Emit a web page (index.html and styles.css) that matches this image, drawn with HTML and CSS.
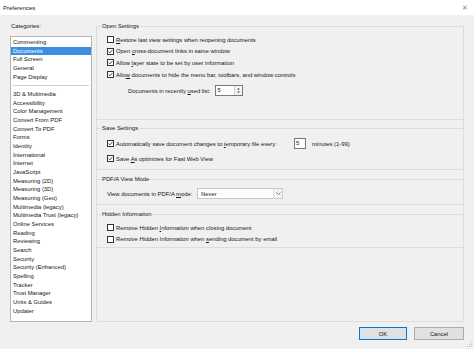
FILE: index.html
```html
<!DOCTYPE html>
<html lang="en">
<head>
    <meta charset="UTF-8">
    <title>Preferences</title>
    <link rel="stylesheet" href="styles.css">
</head>
<body>
    <div class="window">
        <div class="titlebar">
            <span class="title">Preferences</span>
            <span class="close">&#x2715;</span>
        </div>

        <div class="content">
            <div class="main">
                <!-- categories -->
                <div class="sidebar">
                    <div class="cat-label">Categories:</div>
                    <ul class="cat-list">
                        <li>Commenting</li>
                        <li class="selected">Documents</li>
                        <li>Full Screen</li>
                        <li>General</li>
                        <li>Page Display</li>
                        <li class="sep"><span></span></li>
                        <li>3D &amp; Multimedia</li>
                        <li>Accessibility</li>
                        <li>Color Management</li>
                        <li>Convert From PDF</li>
                        <li>Convert To PDF</li>
                        <li>Forms</li>
                        <li>Identity</li>
                        <li>International</li>
                        <li>Internet</li>
                        <li>JavaScript</li>
                        <li>Measuring (2D)</li>
                        <li>Measuring (3D)</li>
                        <li>Measuring (Geo)</li>
                        <li>Multimedia (legacy)</li>
                        <li>Multimedia Trust (legacy)</li>
                        <li>Online Services</li>
                        <li>Reading</li>
                        <li>Reviewing</li>
                        <li>Search</li>
                        <li>Security</li>
                        <li>Security (Enhanced)</li>
                        <li>Spelling</li>
                        <li>Tracker</li>
                        <li>Trust Manager</li>
                        <li>Units &amp; Guides</li>
                        <li>Updater</li>
                    </ul>
                </div>

                <!-- settings panel -->
                <div class="panel">
                    <div class="group g-open">
                        <div class="group-title">Open Settings</div>
                        <div class="rows">
                            <div class="check-row"><span class="box"></span><span><u>R</u>estore last view settings when reopening documents</span></div>
                            <div class="check-row"><span class="box checked"></span><span>Open <u>c</u>ross-document links in same window</span></div>
                            <div class="check-row"><span class="box checked"></span><span>Allow <u>l</u>ayer state to be set by user information</span></div>
                            <div class="check-row"><span class="box checked"></span><span>Allo<u>w</u> documents to hide the menu bar, toolbars, and window controls</span></div>
                        </div>
                        <div class="recent-row">
                            <span>Documents in recently <u>u</u>sed list:</span>
                            <div class="spin">
                                <span class="spin-value">5</span>
                                <span class="spin-btns">
                                    <svg width="7" height="9" viewBox="0 0 7 9"><path d="M2 3.5 L3.5 2 L5 3.5 Z M2 5.5 L3.5 7 L5 5.5 Z" fill="#444"/></svg>
                                </span>
                            </div>
                        </div>
                    </div>

                    <div class="group g-save">
                        <div class="group-title">Save Settings</div>
                        <div class="rows rows-save">
                            <div class="check-row">
                                <span class="box checked"></span>
                                <span class="auto-label">Automatically save document changes to <u>t</u>emporary file every:</span>
                                <span class="num-input">5</span>
                                <span class="unit">minutes (1-99)</span>
                            </div>
                            <div class="check-row"><span class="box checked"></span><span>Save <u>A</u>s optimizes for Fast Web View</span></div>
                        </div>
                    </div>

                    <div class="group g-pdfa">
                        <div class="group-title">PDF/A View Mode</div>
                        <div class="select-row">
                            <span class="select-label">View documents in PDF/A <u>m</u>ode:</span>
                            <div class="select">
                                <span>Never</span>
                                <span class="select-arrow">
                                    <svg width="7" height="7" viewBox="0 0 7 7"><path d="M1.5 2.5 L3.5 4.5 L5.5 2.5" fill="none" stroke="#555" stroke-width="0.8"/></svg>
                                </span>
                            </div>
                        </div>
                    </div>

                    <div class="group g-hidden">
                        <div class="group-title">Hidden Information</div>
                        <div class="rows">
                            <div class="check-row"><span class="box"></span><span>Remove Hidden <u>I</u>nformation when closing document</span></div>
                            <div class="check-row"><span class="box"></span><span>Remove Hidden Information when <u>s</u>ending document by email</span></div>
                        </div>
                    </div>
                </div>
            </div>

            <div class="buttons">
                <button class="btn btn-ok">OK</button>
                <button class="btn">Cancel</button>
            </div>
        </div>

        <svg class="grip" width="7" height="7" viewBox="0 0 7 7">
            <rect x="5" y="1" width="1" height="1" fill="#bbb"/>
            <rect x="3" y="3" width="1" height="1" fill="#bbb"/>
            <rect x="5" y="3" width="1" height="1" fill="#bbb"/>
            <rect x="1" y="5" width="1" height="1" fill="#bbb"/>
            <rect x="3" y="5" width="1" height="1" fill="#bbb"/>
            <rect x="5" y="5" width="1" height="1" fill="#bbb"/>
        </svg>
    </div>
</body>
</html>
```

FILE: styles.css
```css
/* window */
* {
    box-sizing: border-box;
}

body, html {
    margin: 0;
    padding: 0;
    font-family: "Liberation Sans", Arial, sans-serif;
    font-size: 5.85px;
    color: #151515;
    overflow: hidden;
}

.window {
    position: relative;
    width: 474px;
    height: 349px;
    background: #f0f0f0;
    display: flex;
    flex-direction: column;
}

.titlebar {
    height: 15px;
    background: #ffffff;
    display: flex;
    align-items: center;
    justify-content: space-between;
    padding: 0 6px 0 3px;
}

.title {
    font-size: 6px;
    color: #222;
}

.close {
    font-size: 7px;
    color: #888;
}

.content {
    padding: 0 10px;
}

.main {
    display: flex;
    gap: 4px;
    height: 307px;
}

/* categories */
.sidebar {
    width: 82px;
    display: flex;
    flex-direction: column;
}

.cat-label {
    margin-top: 7px;
    height: 8px;
    line-height: 8px;
    padding-left: 1px;
}

.cat-list {
    list-style: none;
    margin: 6px 0 0;
    padding: 1px 0 0;
    height: 286px;
    background: #ffffff;
    border: 1px solid #b4b4b4;
}

.cat-list li {
    height: 8.68px;
    line-height: 8.68px;
    padding-left: 2px;
    white-space: nowrap;
}

.cat-list li.selected {
    background: #3d8ee0;
    color: #ffffff;
}

.cat-list li.sep {
    display: flex;
    align-items: center;
    padding: 0 2px;
}

.cat-list li.sep span {
    display: block;
    width: 100%;
    height: 1px;
    background: #c3d3e6;
}

/* settings panel */
.panel {
    flex: 1;
    margin-top: 11px;
    border: 1px solid #dcdcdc;
    border-top: none;
}

.group {
    border-top: 1px solid #dcdcdc;
    border-bottom: 1px solid #dcdcdc;
    padding-left: 10px;
}

.group-title {
    width: max-content;
    height: 8px;
    line-height: 8px;
    margin: -5px 0 0 -6px;
    padding: 0 1px;
    background: #f0f0f0;
}

.g-open { height: 94px; }
.g-save { height: 42px; margin-top: 8px; }
.g-pdfa { height: 26px; margin-top: 9px; }
.g-hidden { height: 34px; margin-top: 9px; }

.rows {
    margin-top: 4px;
}

.rows-save {
    margin-top: 6px;
    display: flex;
    flex-direction: column;
    gap: 4px;
}

.rows-save .check-row {
    height: 11px;
}

.check-row {
    height: 11.6px;
    display: flex;
    align-items: center;
    gap: 2px;
    white-space: nowrap;
}

.box {
    width: 7px;
    height: 7px;
    flex: none;
    background: #ffffff;
    border: 1px solid #333333;
}

.box.checked {
    background: #ffffff url("data:image/svg+xml;utf8,<svg xmlns='http://www.w3.org/2000/svg' width='5' height='5' viewBox='0 0 5 5'><path d='M0.6 2.6 L1.9 3.9 L4.4 0.9' fill='none' stroke='%23222' stroke-width='0.8'/></svg>") no-repeat center;
}

/* spin box */
.recent-row {
    display: flex;
    align-items: center;
    gap: 4px;
    margin: 5px 0 0 21px;
    height: 11px;
}

.spin {
    display: flex;
    height: 11px;
    border: 1px solid #7a7a7a;
    background: #ffffff;
}

.spin-value {
    width: 18px;
    line-height: 9px;
    padding-left: 2px;
}

.spin-btns {
    width: 8px;
    display: flex;
    align-items: center;
    justify-content: center;
    background: #f4f4f4;
    border-left: 1px solid #d0d0d0;
}

/* autosave row */
.auto-label {
    width: 176px;
}

.num-input {
    width: 12px;
    height: 11px;
    line-height: 9px;
    padding-left: 1px;
    background: #ffffff;
    border: 1px solid #7a7a7a;
}

.unit {
    margin-left: 4px;
}

/* pdf/a row */
.select-row {
    display: flex;
    align-items: center;
    margin-top: 5px;
    height: 11px;
}

.select-label {
    width: 90px;
}

.select {
    width: 86px;
    height: 11px;
    display: flex;
    align-items: center;
    justify-content: space-between;
    padding-left: 3px;
    background: #ffffff;
    border: 1px solid #c8c8c8;
}

.select-arrow {
    width: 9px;
    height: 9px;
    display: flex;
    align-items: center;
    justify-content: center;
    background: #f2f2f2;
    border-left: 1px solid #dddddd;
}

/* buttons */
.buttons {
    display: flex;
    justify-content: flex-end;
    gap: 7px;
    margin-top: 5px;
}

.btn {
    height: 13px;
    width: 50px;
    padding: 0;
    font-family: inherit;
    font-size: 5.85px;
    color: #151515;
    background: #e1e1e1;
    border: 1px solid #adadad;
}

.btn-ok {
    width: 48px;
    border-color: #0078d7;
}

.grip {
    position: absolute;
    right: 1px;
    bottom: 1px;
}
```
